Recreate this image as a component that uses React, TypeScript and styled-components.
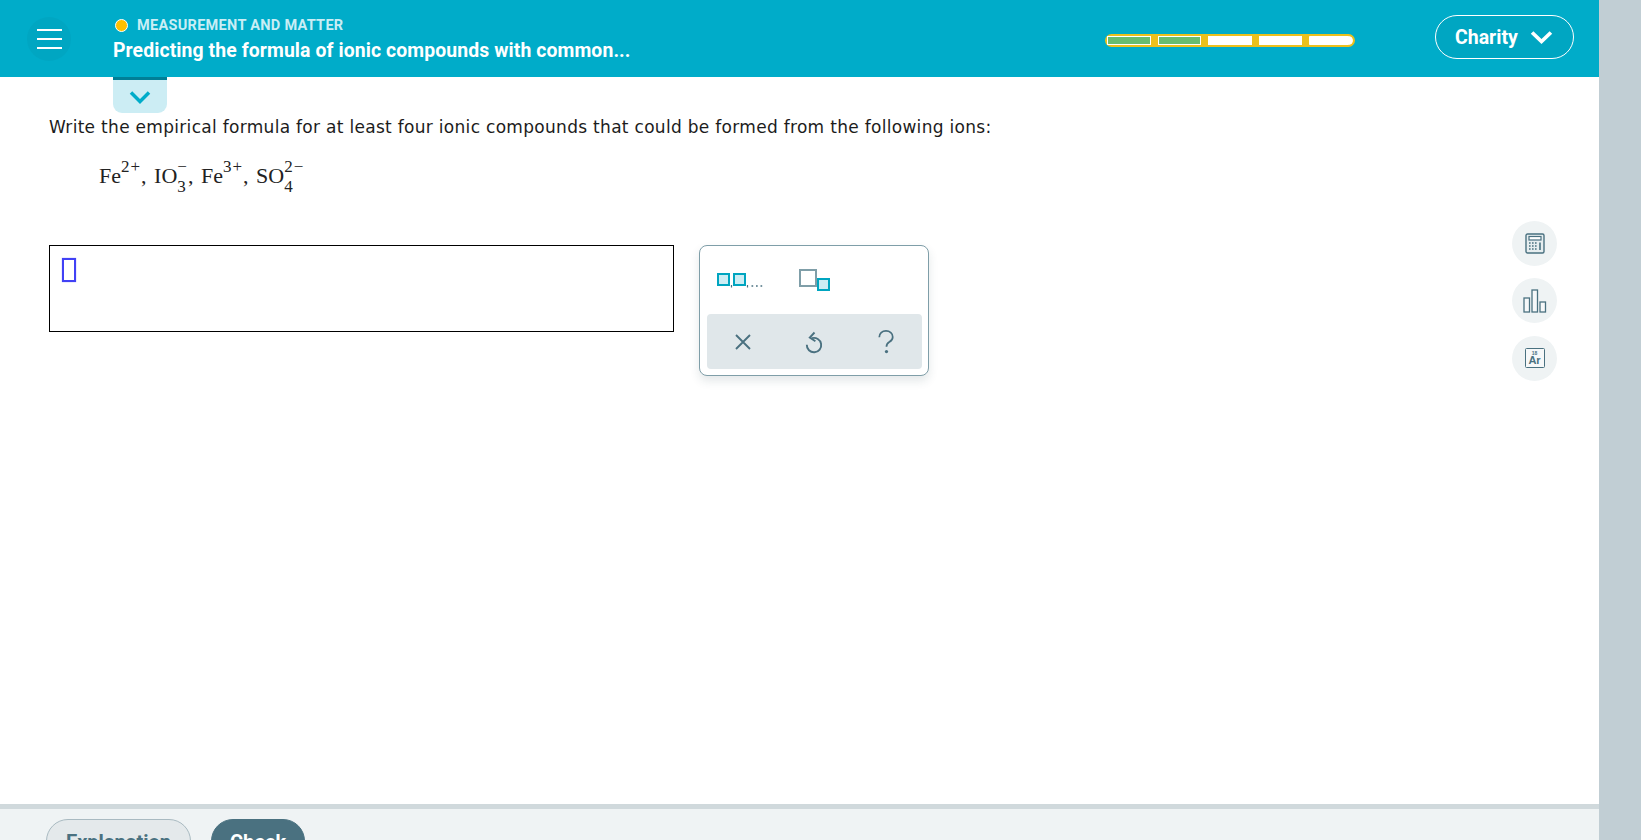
import React from 'react';
import styled, {createGlobalStyle} from 'styled-components';

const GlobalStyle = createGlobalStyle`
  html, body {
    margin: 0;
    padding: 0;
    background: #fff;
  }
`;

const uiFont = `Roboto, "Open Sans", sans-serif`;

const Page = styled.div`
  display: flex;
  width: 1641px;
  height: 840px;
  overflow: hidden;
`;

const Main = styled.div`
  flex: 1;
  min-width: 0;
  display: flex;
  flex-direction: column;
`;

const ScrollGutter = styled.div`
  width: 42px;
  background: #c1ced4;
`;

const Header = styled.header`
  flex: none;
  height: 77px;
  display: flex;
  align-items: center;
  background: #00acc9;
  font-family: ${uiFont};
`;

const MenuButton = styled.button`
  width: 44px;
  height: 44px;
  margin-left: 27px;
  padding: 0;
  border: 0;
  border-radius: 50%;
  background: #00a6c2;
  display: flex;
  flex-direction: column;
  align-items: center;
  justify-content: center;
  gap: 7px;
`;

const MenuLine = styled.span`
  width: 25px;
  height: 2px;
  background: #fff;
`;

const TitleBlock = styled.div`
  margin: 3px 0 0 42px;
  display: flex;
  flex-direction: column;
  gap: 5px;
`;

const Topic = styled.div`
  display: flex;
  align-items: center;
  gap: 9px;
  margin-left: 2px;
  font-size: 14.5px;
  line-height: 16px;
  font-weight: 700;
  letter-spacing: 0.3px;
  color: #c9eef5;
`;

const TopicDot = styled.span`
  width: 11px;
  height: 11px;
  border: 1.5px solid #fff;
  border-radius: 50%;
  background: #ffc000;
`;

const Title = styled.div`
  font-size: 19.4px;
  line-height: 24px;
  font-weight: 700;
  letter-spacing: 0.1px;
  color: #fff;
`;

const Progress = styled.div`
  margin: 3px 0 0 auto;
  width: 250px;
  height: 13px;
  box-sizing: border-box;
  padding: 2px;
  border-radius: 7px;
  background: #ecc01c;
  display: flex;
  gap: 7px;
`;

const Segment = styled.div<{$done: boolean; $last?: boolean}>`
  flex: 1;
  box-sizing: border-box;
  border: 1px solid #fff;
  background: ${({$done}) => ($done ? '#68bd70' : '#fff')};
  border-radius: ${({$last}) => ($last ? '0 5px 5px 0' : '0')};
`;

const UserButton = styled.button`
  width: 139px;
  height: 44px;
  margin: -3px 25px 0 80px;
  padding: 0 0 0 19px;
  box-sizing: border-box;
  border: 1px solid #fff;
  border-radius: 22px;
  background: #00a6c2;
  color: #fff;
  font-family: ${uiFont};
  font-size: 19.5px;
  font-weight: 700;
  display: flex;
  align-items: center;
  gap: 12px;
`;

const Content = styled.div`
  flex: 1;
  min-height: 0;
  display: flex;
  justify-content: space-between;
`;

const Body = styled.div`
  padding-left: 49px;
`;

const DrawerTab = styled.div`
  width: 54px;
  height: 36px;
  margin-left: 64px;
  box-sizing: border-box;
  border-top: 3px solid #007f97;
  border-radius: 0 0 9px 9px;
  background: #ccedf4;
  display: flex;
  align-items: center;
  justify-content: center;
`;

const Question = styled.p`
  margin: 2px 0 0;
  font-family: "DejaVu Sans", Verdana, sans-serif;
  font-size: 17px;
  letter-spacing: 0.3px;
  line-height: 24px;
  color: #1c1c1c;
`;

const Formula = styled.div`
  margin: 20px 0 0 50px;
  height: 68px;
  font-family: "Liberation Serif", "Times New Roman", serif;
  font-size: 22px;
  line-height: 30px;
  word-spacing: 2px;
  color: #222;
  white-space: pre;
`;

const Script = styled.span`
  display: inline-flex;
  flex-direction: column;
  vertical-align: 11px;
  font-size: 17px;
  line-height: 16px;
  height: 16px;
`;

const Sup = styled.span`
  display: block;
  height: 16px;
  letter-spacing: 1px;
`;

const Sub = styled.span`
  display: block;
  height: 16px;
  margin-top: 4px;
`;

const Workspace = styled.div`
  margin-top: 18px;
  display: flex;
  gap: 25px;
`;

const AnswerBox = styled.div`
  width: 625px;
  height: 87px;
  box-sizing: border-box;
  border: 1px solid #000;
  padding: 12px 12px;
`;

const Caret = styled.div`
  width: 14px;
  height: 24px;
  box-sizing: border-box;
  border: 2px solid #4141f5;
  box-shadow: 0 0 1px #8a8aff;
`;

const ToolPanel = styled.div`
  width: 230px;
  height: 131px;
  box-sizing: border-box;
  padding: 0 6px 6px 7px;
  border: 1px solid #7f9ea8;
  border-radius: 8px;
  background: #fff;
  box-shadow: 0 5px 10px 0 #26465020;
  display: flex;
  flex-direction: column;
`;

const ToolRow = styled.div`
  flex: none;
  height: 68px;
  display: grid;
  grid-template-columns: repeat(3, 1fr);
  align-items: center;
  justify-items: center;
`;

const ActionRow = styled.div`
  flex: 1;
  display: grid;
  grid-template-columns: repeat(3, 1fr);
  align-items: center;
  justify-items: center;
  border-radius: 4px;
  background: #e0e7ea;
`;

const Rail = styled.div`
  margin: 143.8px 42px 0 0;
  display: flex;
  flex-direction: column;
  gap: 12.5px;
`;

const RailButton = styled.div`
  width: 45px;
  height: 45px;
  border-radius: 50%;
  background: #eff3f4;
  display: flex;
  align-items: center;
  justify-content: center;
`;

const Footer = styled.footer`
  flex: none;
  height: 36px;
  box-sizing: border-box;
  border-top: 5px solid #d0d9dc;
  background: #eff3f4;
  padding: 10px 0 0 46px;
  display: flex;
  gap: 20px;
  overflow: hidden;
`;

const FooterButton = styled.button<{$primary?: boolean}>`
  flex: none;
  width: ${({$primary}) => ($primary ? '94px' : '145px')};
  height: 44px;
  box-sizing: border-box;
  border: 1px solid ${({$primary}) => ($primary ? '#4a7180' : '#a9bac1')};
  border-radius: 22px;
  background: ${({$primary}) => ($primary ? '#4a7180' : '#e4e9eb')};
  color: ${({$primary}) => ($primary ? '#fff' : '#4a7180')};
  font-family: ${uiFont};
  font-size: 20px;
  font-weight: 700;
  padding: 2px 0 0;
`;

const Chevron: React.FC<{color: string; width: number; height: number; stroke: number}> = ({color, width, height, stroke}) => (
  <svg width={width} height={height} viewBox='0 0 22 14' preserveAspectRatio='none' fill='none'>
    <path d='M2 2.500l9 9 9-9' stroke={color} strokeWidth={stroke} />
  </svg>
);

const ListIcon = () => (
  <svg width='52' height='15' viewBox='0 0 52 15' fill='none'>
    <rect x='1' y='1' width='11' height='11' fill='#ccedf4' stroke='#00a5c0' strokeWidth='2' />
    <rect x='17' y='1' width='11' height='11' fill='#ccedf4' stroke='#00a5c0' strokeWidth='2' />
    <path d='M14.500 12v2.500M30.500 12v2.500' stroke='#4a7180' strokeWidth='1.200' />
    <path d='M34.500 13h1.700M39 13h1.700M43.500 13h1.700' stroke='#4a7180' strokeWidth='1.700' />
  </svg>
);

const SubscriptIcon = () => (
  <svg width='35' height='23' viewBox='-2 0 35 23' fill='none'>
    <rect x='1' y='1' width='16' height='16' fill='#fff' stroke='#7f9ea8' strokeWidth='2' />
    <rect x='19' y='10' width='11' height='11' fill='#ccedf4' stroke='#00a5c0' strokeWidth='2' />
  </svg>
);

const CloseIcon = () => (
  <svg width='18' height='18' viewBox='0 0 18 18' fill='none'>
    <path d='M2 2l14 14M16 2L2 16' stroke='#4a7180' strokeWidth='1.900' />
  </svg>
);

const UndoIcon = () => (
  <svg width='18' height='24' viewBox='0 0 18 24' fill='none'>
    <path d='M7 8.200a7.200 7.200 0 1 1-5.200 6.600' stroke='#4a7180' strokeWidth='1.900' />
    <path d='M9.500 2.500L4.800 7.600l5.600 3.600' stroke='#4a7180' strokeWidth='1.900' />
  </svg>
);

const HelpIcon = () => (
  <svg width='18' height='25' viewBox='0 0 18 26' fill='none'>
    <path d='M2 8.500C2 4.500 5 2 9 2s7 2.600 7 6.200c0 2.800-1.600 4.200-3.600 5.400C10.400 14.800 9.500 16 9.500 18.500' stroke='#4a7180' strokeWidth='1.800' />
    <circle cx='9.500' cy='23.500' r='1.700' fill='#4a7180' />
  </svg>
);

const CalculatorIcon = () => (
  <svg width='20' height='21' viewBox='0 0 20 21' fill='none'>
    <rect x='1' y='1' width='18' height='19' rx='1.500' fill='#e6edef' stroke='#4a7180' strokeWidth='1.400' />
    <rect x='4' y='3.500' width='12' height='3.500' fill='#fff' stroke='#4a7180' strokeWidth='1.200' />
    <path d='M4 10h1.600M7 10h1.600M10 10h1.600M4 13h1.600M7 13h1.600M10 13h1.600M4 16h1.600M7 16h1.600M10 16h1.600' stroke='#4a7180' strokeWidth='1.600' />
    <path d='M15 9.500v7.500' stroke='#4a7180' strokeWidth='1.600' />
  </svg>
);

const ChartIcon = () => (
  <svg width='24' height='24' viewBox='0 0 24 24' fill='none'>
    <rect x='1' y='9' width='5.500' height='14' fill='#f6f8f9' stroke='#4a7180' strokeWidth='1.300' />
    <rect x='9' y='1' width='5.500' height='22' fill='#f6f8f9' stroke='#4a7180' strokeWidth='1.300' />
    <rect x='17' y='13' width='5.500' height='10' fill='#f6f8f9' stroke='#4a7180' strokeWidth='1.300' />
  </svg>
);

const ElementTile = styled.div`
  width: 20px;
  height: 20px;
  box-sizing: border-box;
  border: 1.300px solid #4a7180;
  border-radius: 1.500px;
  background: #f6f8f9;
  color: #4a7180;
  font-family: "Liberation Sans", Arial, sans-serif;
  font-weight: 700;
  display: flex;
  flex-direction: column;
  align-items: center;
`;

const ElementNumber = styled.span`
  font-size: 5px;
  line-height: 6px;
  margin-top: 1px;
`;

const ElementSymbol = styled.span`
  font-size: 11px;
  line-height: 9px;
`;

const App: React.FC = () => {
  const segments = [true, true, false, false, false];

  return (
    <Page>
      <GlobalStyle />
      <Main>
        <Header>
          <MenuButton aria-label='Menu'>
            <MenuLine />
            <MenuLine />
            <MenuLine />
          </MenuButton>
          <TitleBlock>
            <Topic>
              <TopicDot />
              MEASUREMENT AND MATTER
            </Topic>
            <Title>Predicting the formula of ionic compounds with common...</Title>
          </TitleBlock>
          <Progress>
            {segments.map((done, i) => (
              <Segment key={i} $done={done} $last={i === segments.length - 1} />
            ))}
          </Progress>
          <UserButton>
            Charity
            <Chevron color='#fff' width={23} height={14} stroke={3.500} />
          </UserButton>
        </Header>
        <Content>
          <Body>
            <DrawerTab>
              <Chevron color='#00acc9' width={22} height={14} stroke={3.500} />
            </DrawerTab>
            <Question>Write the empirical formula for at least four ionic compounds that could be formed from the following ions:</Question>
            <Formula>
              Fe<Script><Sup>2+</Sup></Script>, IO<Script><Sup>−</Sup><Sub>3</Sub></Script>, Fe<Script><Sup>3+</Sup></Script>, SO<Script><Sup>2−</Sup><Sub>4</Sub></Script>
            </Formula>
            <Workspace>
              <AnswerBox>
                <Caret />
              </AnswerBox>
              <ToolPanel>
                <ToolRow>
                  <ListIcon />
                  <SubscriptIcon />
                </ToolRow>
                <ActionRow>
                  <CloseIcon />
                  <UndoIcon />
                  <HelpIcon />
                </ActionRow>
              </ToolPanel>
            </Workspace>
          </Body>
          <Rail>
            <RailButton><CalculatorIcon /></RailButton>
            <RailButton><ChartIcon /></RailButton>
            <RailButton>
              <ElementTile>
                <ElementNumber>18</ElementNumber>
                <ElementSymbol>Ar</ElementSymbol>
              </ElementTile>
            </RailButton>
          </Rail>
        </Content>
        <Footer>
          <FooterButton>Explanation</FooterButton>
          <FooterButton $primary>Check</FooterButton>
        </Footer>
      </Main>
      <ScrollGutter />
    </Page>
  );
};

export default App;
